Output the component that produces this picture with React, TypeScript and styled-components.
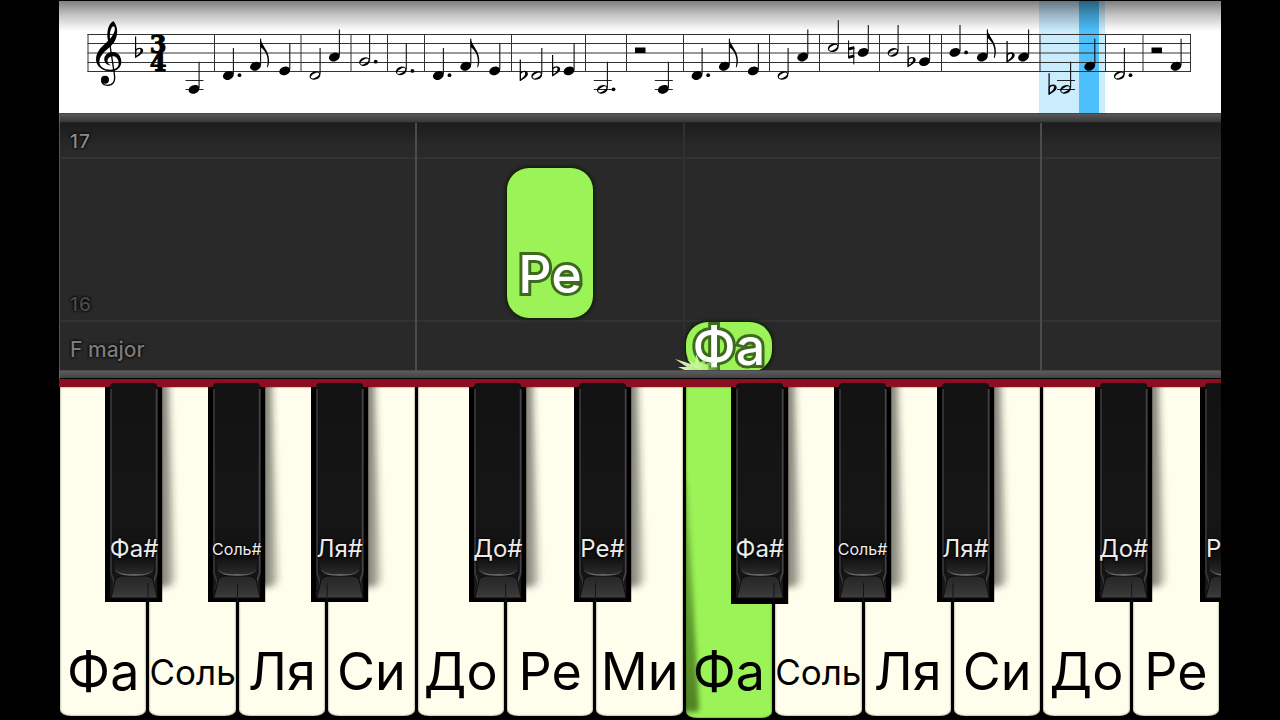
import React from "react";
import styled, { createGlobalStyle, css } from "styled-components";

const GlobalStyle = createGlobalStyle`
  *, *::before, *::after { box-sizing: border-box; }
  body {
    margin: 0;
    background: #000;
    font-family: Inter, "Liberation Sans", sans-serif;
  }
`;

const GREEN = "#9cf357";
const IVORY = "#fffeec";

/* ---------- page frame ---------- */

const Page = styled.main`
  display: flex;
  flex-direction: column;
  min-height: 100vh;
  padding: 1px 59px 0;
  background: #000;
  overflow: hidden;
`;

const Rail = styled.div<{ $lower?: boolean }>`
  flex: none;
  height: ${({ $lower }) => ($lower ? 9 : 10)}px;
  border-left: 1px solid #666;
  background: ${({ $lower }) =>
    $lower
      ? "linear-gradient(#3c3c3c, #5b5b5d 12%, #454547 85%, #000 88%)"
      : "linear-gradient(#3a3a3a, #575757 15%, #393939 85%, #1b1b1b)"};
`;

/* ---------- sheet music ---------- */

const Score = styled.section`
  flex: none;
  height: 112px;
  background: #fff;
  overflow: hidden;
`;

const ScoreDrawing = styled.svg`
  display: block;
  width: 100%;
  height: 112px;
`;

const TimeDigit = styled.text`
  font-family: "DejaVu Serif", serif;
  font-size: 24px;
  font-weight: 700;
  text-anchor: middle;
  stroke: #000;
  stroke-width: 1px;
`;

type NoteKind = "quarter" | "half" | "eighth";
interface ScoreNote {
  x: number;
  step: number;
  kind: NoteKind;
  dot?: boolean;
  accidental?: "flat" | "natural";
}

const STAFF = [34.5, 43.5, 53, 62.5, 71.5];
const BARS = [88, 214.5, 301, 351, 387.5, 424.5, 511.5, 585.5, 626.5, 683.5, 769.5, 819.5, 879.5, 941.5, 1040, 1105.5, 1143, 1190.5];

/* step counts half-spaces down from the middle line */
const NOTES: ScoreNote[] = [
  { x: 194, step: 8, kind: "quarter" },
  { x: 228.3, step: 5, kind: "quarter", dot: true },
  { x: 255.5, step: 3, kind: "eighth" },
  { x: 284.7, step: 4, kind: "quarter" },
  { x: 315, step: 5, kind: "half" },
  { x: 334.3, step: 1, kind: "quarter" },
  { x: 364.5, step: 2, kind: "half", dot: true },
  { x: 401.2, step: 4, kind: "half", dot: true },
  { x: 438.3, step: 5, kind: "quarter", dot: true },
  { x: 465.7, step: 3, kind: "eighth" },
  { x: 494.7, step: 4, kind: "quarter" },
  { x: 536.7, step: 5, kind: "half", accidental: "flat" },
  { x: 569, step: 4, kind: "quarter", accidental: "flat" },
  { x: 602.3, step: 8, kind: "half", dot: true },
  { x: 663.3, step: 8, kind: "quarter" },
  { x: 697, step: 5, kind: "quarter", dot: true },
  { x: 724.3, step: 3, kind: "eighth" },
  { x: 753.3, step: 4, kind: "quarter" },
  { x: 783, step: 5, kind: "half" },
  { x: 802.7, step: 1, kind: "quarter" },
  { x: 833.2, step: -1, kind: "half" },
  { x: 863.2, step: 0, kind: "quarter", accidental: "natural" },
  { x: 893, step: 0, kind: "half" },
  { x: 924.5, step: 2, kind: "quarter", accidental: "flat" },
  { x: 954.9, step: 0, kind: "quarter", dot: true },
  { x: 982.3, step: 1, kind: "eighth" },
  { x: 1023.5, step: 1, kind: "quarter", accidental: "flat" },
  { x: 1065.5, step: 8, kind: "half", accidental: "flat" },
  { x: 1089.7, step: 3, kind: "quarter" },
  { x: 1119.3, step: 5, kind: "half", dot: true },
  { x: 1176, step: 3, kind: "quarter" },
];

function Flat({ x, y }: { x: number; y: number }) {
  return (
    <g transform={`translate(${x} ${y})`}>
      <path d="M-3.4 -16V5.2" stroke="#000" strokeWidth="1.2" fill="none" />
      <path
        fillRule="evenodd"
        d="M-3.8 -2.4C-1.5 -5.9 4.2 -5.3 4.2 -1.8C4.2 1.6 -0.6 3.6 -3.8 5.8ZM-2.8 -1.4V3.4C-0.6 1.8 1.5 0.2 1.5 -2C1.5 -4.2 -1.6 -3.6 -2.8 -1.4Z"
      />
    </g>
  );
}

function Natural({ x, y }: { x: number; y: number }) {
  return (
    <g transform={`translate(${x} ${y})`} stroke="#000" fill="none">
      <path d="M-2.6 -12V5.4M2.6 -5.6V12" strokeWidth="1" />
      <path d="M-3 -3.2L3 -4.8M-3 5L3 3.4" strokeWidth="2.8" />
    </g>
  );
}

function NoteGlyph({ note }: { note: ScoreNote }) {
  const y = 52.4 + note.step * 4.62;
  const { x } = note;
  return (
    <g>
      {note.step === 8 && (
        <path d={`M${x - 8.5} 80.5h18M${x - 8.5} 89.5h18`} stroke="#222" strokeWidth="1" />
      )}
      {note.accidental === "flat" && <Flat x={x - 13} y={y} />}
      {note.accidental === "natural" && <Natural x={x - 12} y={y} />}
      <g transform={`translate(${x} ${y})`}>
        {note.kind === "half" ? (
          <path
            fillRule="evenodd"
            d="M5.2 -1.9A5.5 4.1 -20 0 1 -5.2 1.9A5.5 4.1 -20 0 1 5.2 -1.9ZM3.9 -2.3A4.5 2 -30 0 0 -3.9 2.3A4.5 2 -30 0 0 3.9 -2.3Z"
          />
        ) : (
          <ellipse rx="5.6" ry="4.2" transform="rotate(-22)" />
        )}
        <path d="M5.1 -1.5V-27.5" stroke="#111" strokeWidth="1.1" />
        {note.kind === "eighth" && (
          <path d="M4.7 -28.5C5.6 -21 13.8 -16 13.6 -5.5C13.5 -2.5 13 -0.5 12.2 1.2L11.5 0.8C13.4 -7 11.6 -14.5 4.7 -19.5Z" />
        )}
        {note.dot && <circle cx="11.2" cy={note.step % 2 ? -0.3 : 0} r="1.9" />}
      </g>
    </g>
  );
}

function SheetMusic() {
  return (
    <ScoreDrawing viewBox="59 1 1162 112" role="img" aria-label="Melody in F major, 3/4 time">
      <defs>
        <linearGradient id="scoreShade" x1="0" y1="0" x2="0" y2="1">
          <stop offset="0" stopColor="#000" stopOpacity="0.5" />
          <stop offset="0.45" stopColor="#000" stopOpacity="0.24" />
          <stop offset="1" stopColor="#000" stopOpacity="0" />
        </linearGradient>
      </defs>
      <rect x="1039" y="0" width="66" height="114" fill="#caecfd" />
      <rect x="1079" y="0" width="20" height="114" fill="#4dbffa" />
      <rect x="59" y="1" width="1162" height="30" fill="url(#scoreShade)" />
      <g stroke="#333" strokeWidth="1">
        {STAFF.map((y) => (
          <path key={y} d={`M87.5 ${y}H1191`} />
        ))}
        {BARS.map((x) => (
          <path key={x} d={`M${x} 34V72`} />
        ))}
      </g>
      <g transform="translate(50 0) scale(0.3333)">
        <path d="M176 130C167 100 174 72 190 63C205 79 206 108 191 129C176 148 149 160 148 185C148 200 162 209 182 209C199 209 206 201 206 190C206 177 198 169 189 169C178 169 171 177 173 185C174 190 178 194 184 196C168 196 161 184 163 174C166 162 177 156 188 156C204 156 214 169 214 185C214 203 200 214 180 214C155 214 138 197 138 178C138 150 164 135 179 118C191 104 199 88 192 79C183 79 177 98 181 122Z" />
        <path d="M178 122L193 222C197 246 188 256 173 256C162 256 156 250 155 243" fill="none" stroke="#000" strokeWidth="4" />
        <circle cx="165" cy="239" r="12" />
      </g>
      <Flat x={139} y={52.4} />
      <TimeDigit x={158} y={53}>3</TimeDigit>
      <TimeDigit x={158} y={71}>4</TimeDigit>
      {NOTES.map((note) => (
        <NoteGlyph key={note.x} note={note} />
      ))}
      <rect x="635" y="47.5" width="10.5" height="5.5" />
      <rect x="1151.5" y="47.5" width="10.5" height="5.5" />
    </ScoreDrawing>
  );
}

/* ---------- falling notes ---------- */

const Roll = styled.section`
  position: relative;
  flex: 1 0 247px;
  display: flex;
  flex-direction: column;
  background: linear-gradient(#1d1d1d, #292929 24px);
  overflow: hidden;
`;

const Measure = styled.div<{ $height: number; $last?: boolean }>`
  display: flex;
  align-items: flex-end;
  flex: ${({ $last, $height }) => ($last ? "1" : `0 0 ${$height}px`)};
  padding: 0 10px 4px;
  border-left: 1px solid #555;
  border-bottom: ${({ $last }) => ($last ? "0" : "2px solid #333")};
`;

const MeasureLabel = styled.span<{ $dim?: boolean }>`
  font-size: 19px;
  font-weight: 500;
  line-height: 22px;
  letter-spacing: 1px;
  color: ${({ $dim }) => ($dim ? "#4b4b4b" : "#8c8c8c")};
  text-shadow: 0 0 3px #000, 0 0 3px #000;
`;

const KeyLabel = styled.span`
  font-size: 21px;
  font-weight: 500;
  line-height: 32px;
  color: #7b7b7b;
  text-shadow: 0 0 3px #000, 0 0 3px #000;
`;

const Lanes = styled.div`
  position: absolute;
  inset: 0;
  display: flex;
`;

const Lane = styled.div<{ $keys: number; $line?: string }>`
  flex: ${({ $keys }) => $keys} 1 0;
  box-shadow: ${({ $line }) => ($line ? `-2px 0 ${$line}` : "none")};
`;

const NoteGrid = styled.div`
  position: absolute;
  inset: 0;
  display: grid;
  grid-template-columns: repeat(13, 1fr);
  align-items: start;
`;

const FallingNote = styled.div<{ $column: number; $top: number; $height: number; $sinking?: boolean }>`
  grid-area: 1 / ${({ $column }) => $column};
  display: flex;
  align-items: flex-end;
  justify-content: center;
  height: ${({ $height }) => $height}px;
  margin: ${({ $top }) => $top}px 2px 0 1px;
  padding-bottom: ${({ $sinking }) => ($sinking ? 3 : 21)}px;
  border-radius: 22px;
  background: ${GREEN};
  box-shadow: 0 0 3px 2px #14200c;
  color: #fff;
  font-size: 52px;
  font-weight: 500;
  line-height: 44px;
  -webkit-text-stroke: 6px #3d6a1f;
  paint-order: stroke fill;
`;

const Splash = styled.svg`
  grid-area: 1 / 8;
  width: 58px;
  height: 18px;
  margin: 231px 0 0 -12px;
  z-index: 1;
`;

/* ---------- keyboard ---------- */

const Keyboard = styled.section`
  flex: none;
  display: flex;
  height: 341px;
  padding-bottom: 4px;
  border-top: 8px solid #8a0f20;
  background: #000;
  clip-path: inset(0);
`;

const KeySlot = styled.div`
  position: relative;
  flex: 1 1 0;
  min-width: 0;
  display: flex;
`;

const keyReset = css`
  appearance: none;
  border: 0;
  margin: 0;
  font-family: inherit;
  cursor: pointer;
`;

const WhiteKey = styled.button<{ $pressed?: boolean; $small?: boolean }>`
  ${keyReset}
  flex: 1;
  display: flex;
  align-items: flex-end;
  justify-content: center;
  min-width: 0;
  margin: 0 2px ${({ $pressed }) => ($pressed ? -2 : 0)}px 1px;
  padding: 0 0 ${({ $pressed }) => ($pressed ? 14 : 12)}px;
  border-radius: 0 0 11px 11px / 0 0 6px 6px;
  background: ${({ $pressed }) => ($pressed ? GREEN : IVORY)};
  box-shadow: inset 0 0 2px ${({ $pressed }) => ($pressed ? "#3d6a1f" : "#55554c")};
  color: #000;
  font-size: ${({ $small }) => ($small ? 35 : 52)}px;
  line-height: 64px;
  white-space: nowrap;
`;

const PressShade = styled.svg`
  position: absolute;
  top: 0;
  left: 1px;
  width: 30px;
  height: 328px;
  pointer-events: none;
`;

const BlackKey = styled.button<{ $left: number; $small?: boolean }>`
  ${keyReset}
  position: absolute;
  z-index: 2;
  top: -4px;
  left: ${({ $left }) => $left}%;
  width: 64%;
  height: 219px;
  display: flex;
  align-items: flex-end;
  justify-content: center;
  padding: 0 0 37px;
  background: none;
  color: #ececec;
  font-size: ${({ $small }) => ($small ? 16 : 24)}px;
  line-height: 32px;
  white-space: nowrap;
  text-shadow: 0 0 2px #000, 0 1px 3px #000;
`;

const BlackKeyArt = styled.svg`
  position: absolute;
  inset: 0;
  z-index: -1;
  width: 100%;
  height: 100%;
  overflow: visible;
`;

const SharedDefs = styled.svg`
  display: block;
  flex: none;
  width: 0;
  height: 0;
`;

interface Sharp {
  label: string;
  left: number;
}
interface PianoKey {
  label: string;
  sharp?: Sharp;
  pressed?: boolean;
}

const FA: PianoKey = { label: "Фа", sharp: { label: "Фа#", left: 52 } };
const SOL: PianoKey = { label: "Соль", sharp: { label: "Соль#", left: 67 } };
const LA: PianoKey = { label: "Ля", sharp: { label: "Ля#", left: 82 } };
const SI: PianoKey = { label: "Си" };
const DO: PianoKey = { label: "До", sharp: { label: "До#", left: 59 } };
const RE: PianoKey = { label: "Ре", sharp: { label: "Ре#", left: 76 } };
const MI: PianoKey = { label: "Ми" };

const KEYS: PianoKey[] = [FA, SOL, LA, SI, DO, RE, MI, { ...FA, pressed: true }, SOL, LA, SI, DO, RE];

function SharpKey({ sharp, seam, deep }: { sharp: Sharp; seam: number; deep?: boolean }) {
  return (
    <BlackKey type="button" $left={sharp.left} $small={sharp.label.length > 4}>
      <BlackKeyArt viewBox="0 0 57 219" preserveAspectRatio="none" aria-hidden="true">
        <path d="M50 -4H64L70 196Q70 202 62 204H50Z" fill="url(#keyShade)" filter="url(#softShade)" clipPath="url(#belowFelt)" />
        <rect y="4" width="57" height={deep ? 217 : 215} fill="#000" />
        <path d="M5 219V4Q5 0 9 0H48Q52 0 52 4V215H5Z" fill="url(#keyBody)" />
        <path d="M6 6V190L9 199L7 214" fill="none" stroke="#38383b" strokeWidth="1.6" />
        <path d="M51.5 6V190L48.5 199L51 214" fill="none" stroke="#434347" strokeWidth="1.8" />
        <path d="M8 176L10 187Q15 192 24 192H34Q44 192 48 187L50 176Z" fill="url(#keySlope)" />
        <path d="M6 215L10 197Q12 193 17 193H41Q46 193 48 197L52 215Z" fill="url(#keyFace)" stroke="#0b0b0b" strokeWidth="1" />
        <path d="M10 187Q15 192 24 192H34Q44 192 48 187" fill="none" stroke="url(#keyGlint)" strokeWidth="1.2" />
        <path d={`M${seam} 200V219`} stroke="#151515" strokeWidth="1" />
      </BlackKeyArt>
      {sharp.label}
    </BlackKey>
  );
}

function KeyGradients() {
  return (
    <SharedDefs aria-hidden="true">
      <defs>
        <linearGradient id="keyBody" x1="0" y1="0" x2="0" y2="1">
          <stop offset="0" stopColor="#121212" />
          <stop offset="0.6" stopColor="#161616" />
          <stop offset="0.8" stopColor="#111" />
          <stop offset="1" stopColor="#1c1c1c" />
        </linearGradient>
        <linearGradient id="keySlope" x1="0" y1="0" x2="0" y2="1">
          <stop offset="0" stopColor="#131313" />
          <stop offset="1" stopColor="#2c2c2c" />
        </linearGradient>
        <linearGradient id="keyFace" x1="0" y1="0" x2="0" y2="1">
          <stop offset="0" stopColor="#262626" />
          <stop offset="0.8" stopColor="#363636" />
          <stop offset="1" stopColor="#404040" />
        </linearGradient>
        <linearGradient id="keyGlint" x1="0" y1="0" x2="1" y2="0">
          <stop offset="0" stopColor="#333" />
          <stop offset="0.5" stopColor="#a5a5a5" />
          <stop offset="1" stopColor="#333" />
        </linearGradient>
        <linearGradient id="keyShade" gradientUnits="userSpaceOnUse" x1="56" y1="0" x2="72" y2="0">
          <stop offset="0" stopColor="#282822" stopOpacity="0.62" />
          <stop offset="1" stopColor="#282822" stopOpacity="0.15" />
        </linearGradient>
        <linearGradient id="pressTint" gradientUnits="userSpaceOnUse" x1="0" y1="60" x2="0" y2="320">
          <stop offset="0" stopColor="#1c3a08" stopOpacity="0.2" />
          <stop offset="1" stopColor="#1c3a08" stopOpacity="0.6" />
        </linearGradient>
        <filter id="softEdge" x="-50%" y="-10%" width="200%" height="120%">
          <feGaussianBlur stdDeviation="2.5" />
        </filter>
        <filter id="softShade" x="-60%" y="-10%" width="220%" height="120%">
          <feGaussianBlur stdDeviation="3" />
        </filter>
        <clipPath id="belowFelt">
          <rect x="40" y="4" width="50" height="215" />
        </clipPath>
      </defs>
    </SharedDefs>
  );
}

export default function App() {
  return (
    <>
      <GlobalStyle />
      <Page>
        <Score>
          <SheetMusic />
        </Score>
        <Rail />
        <Roll>
          <Measure $height={36}>
            <MeasureLabel>17</MeasureLabel>
          </Measure>
          <Measure $height={163}>
            <MeasureLabel $dim>16</MeasureLabel>
          </Measure>
          <Measure $height={48} $last>
            <KeyLabel>F major</KeyLabel>
          </Measure>
          <Lanes>
            <Lane $keys={4} />
            <Lane $keys={3} $line="#4c4c4c" />
            <Lane $keys={4} $line="#303030" />
            <Lane $keys={2} $line="#4c4c4c" />
          </Lanes>
          <NoteGrid>
            <FallingNote $column={6} $top={45} $height={150}>Ре</FallingNote>
            <FallingNote $column={8} $top={199} $height={50} $sinking>Фа</FallingNote>
            <Splash viewBox="0 0 58 18" aria-hidden="true">
              <defs>
                <linearGradient id="spark" x1="0" y1="0" x2="1" y2="0">
                  <stop offset="0" stopColor="#e2fbc6" />
                  <stop offset="0.5" stopColor="#c9f79c" stopOpacity="0.9" />
                  <stop offset="1" stopColor="#9cf357" stopOpacity="0.1" />
                </linearGradient>
              </defs>
              <path
                fill="url(#spark)"
                d="M16 18L5 13L14 13L2 5L18 10L14 5L22 10L23 0L27 9L34 3L32 10L44 6L36 13L48 12L42 18Z"
              />
            </Splash>
          </NoteGrid>
        </Roll>
        <Rail $lower />
        <KeyGradients />
        <Keyboard>
          {KEYS.map((key, index) => (
            <KeySlot key={index}>
              <WhiteKey type="button" $pressed={key.pressed} $small={key.label.length > 3} aria-pressed={!!key.pressed}>
                {key.label}
              </WhiteKey>
              {key.pressed && (
                <PressShade viewBox="0 0 30 328" aria-hidden="true">
                  <path d="M-8 60L1 100L13 320Q14 325 8 325H-8Z" fill="url(#pressTint)" filter="url(#softEdge)" />
                </PressShade>
              )}
              {key.sharp && (
                <SharpKey sharp={key.sharp} seam={((100 - key.sharp.left) / 64) * 57} deep={key.pressed} />
              )}
            </KeySlot>
          ))}
        </Keyboard>
      </Page>
    </>
  );
}
